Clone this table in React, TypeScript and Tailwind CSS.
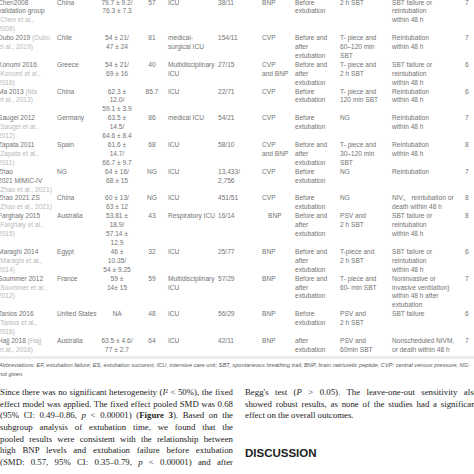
import React from "react";

type Seg = [string, boolean];

interface Row {
  study: Seg[][];
  country: string[];
  age: string[];
  n: string;
  icu: string[];
  efes: string[];
  marker: string[];
  timing: string[];
  sbt: string[];
  outcome: string[];
  score: string;
  markerIndent?: boolean;
}

const rows: Row[] = [
  {
    study: [[["Chen2008", false]], [["validation group", false]], [["(Chen et al.,", true]], [["2008)", true]]],
    country: ["China"],
    age: ["79.7 ± 9.2/", "76.3 ± 7.3"],
    n: "57",
    icu: ["ICU"],
    efes: ["38/11"],
    marker: ["BNP"],
    timing: ["Before", "extubation"],
    sbt: ["2 h SBT"],
    outcome: ["SBT failure or", "reintubation", "within 48 h"],
    score: "7",
  },
  {
    study: [[["Dubo 2019 ", false], ["(Dubo", true]], [["et al., 2019)", true]]],
    country: ["Chile"],
    age: ["54 ± 21/", "47 ± 24"],
    n: "81",
    icu: ["medical-", "surgical ICU"],
    efes: ["154/11"],
    marker: ["CVP"],
    timing: ["Before and", "after", "extubation"],
    sbt: ["T- piece and", "60–120 min", "SBT"],
    outcome: ["Reintubation", "within 48 h"],
    score: "7",
  },
  {
    study: [[["Konomi 2016", false]], [["(Konomi et al.,", true]], [["2016)", true]]],
    country: ["Greece"],
    age: ["54 ± 21/", "69 ± 16"],
    n: "40",
    icu: ["Multidisciplinary", "ICU"],
    efes: ["27/15"],
    marker: ["CVP", "and BNP"],
    timing: ["Before and", "after", "extubation"],
    sbt: ["T- piece and", "2 h SBT"],
    outcome: ["SBT failure or", "reintubation", "within 48 h"],
    score: "6",
  },
  {
    study: [[["Ma 2013 ", false], ["(Ma", true]], [["et al., 2013)", true]]],
    country: ["China"],
    age: ["62.3 ±", "12.0/", "59.1 ± 3.9"],
    n: "85.7",
    icu: ["ICU"],
    efes: ["22/71"],
    marker: ["CVP"],
    timing: ["Before", "extubation"],
    sbt: ["T- piece and", "120 min SBT"],
    outcome: ["Reintubation", "within 48 h"],
    score: "6",
  },
  {
    study: [[["Saugel 2012", false]], [["(Saugel et al.,", true]], [["2012)", true]]],
    country: ["Germany"],
    age: ["63.5 ±", "14.5/", "64.6 ± 8.4"],
    n: "86",
    icu: ["medical ICU"],
    efes: ["54/21"],
    marker: ["CVP"],
    timing: ["Before", "extubation"],
    sbt: ["NG"],
    outcome: ["Reintubation", "within 48 h"],
    score: "7",
  },
  {
    study: [[["Zapata 2011", false]], [["(Zapata et al.,", true]], [["2011)", true]]],
    country: ["Spain"],
    age: ["61.6 ±", "14.7/", "66.7 ± 9.7"],
    n: "68",
    icu: ["ICU"],
    efes: ["58/10"],
    marker: ["CVP", "and BNP"],
    timing: ["Before and", "after", "extubation"],
    sbt: ["T- piece and", "30–120 min", "SBT"],
    outcome: ["Reintubation", "within 48 h"],
    score: "8",
  },
  {
    study: [[["Zhao", false]], [["2021 MIMIC-IV", false]], [["(Zhao et al., 2021)", true]]],
    country: ["NG"],
    age: ["64 ± 16/", "68 ± 15"],
    n: "NG",
    icu: ["ICU"],
    efes: ["13,433/", "2,756"],
    marker: ["CVP"],
    timing: ["Before", "extubation"],
    sbt: ["NG"],
    outcome: ["Reintubation"],
    score: "7",
  },
  {
    study: [[["Zhao 2021 ZS", false]], [["(Zhao et al., 2021)", true]]],
    country: ["China"],
    age: ["60 ± 13/", "63 ± 12"],
    n: "NG",
    icu: ["ICU"],
    efes: ["451/51"],
    marker: ["CVP"],
    timing: ["Before", "extubation"],
    sbt: ["NG"],
    outcome: ["NIV、 reintubation or", "death within 48 h"],
    score: "8",
  },
  {
    study: [[["Farghaly 2015", false]], [["(Farghaly et al.,", true]], [["2015)", true]]],
    country: ["Australia"],
    age: ["53.81 ±", "18.9/", "57.14 ±", "12.9"],
    n: "43",
    icu: ["Respiratory ICU"],
    efes: ["16/14"],
    marker: ["BNP"],
    markerIndent: true,
    timing: ["Before and", "after", "extubation"],
    sbt: ["PSV and", "2 h SBT"],
    outcome: ["SBT failure or", "reintubation", "within 48 h"],
    score: "8",
  },
  {
    study: [[["Maraghi 2014", false]], [["(Maraghi et al.,", true]], [["2014)", true]]],
    country: ["Egypt"],
    age: ["46 ±", "10.35/", "54 ± 9.25"],
    n: "32",
    icu: ["ICU"],
    efes: ["25/77"],
    marker: ["BNP"],
    timing: ["Before and", "after", "extubation"],
    sbt: ["T-piece and", "2 h SBT"],
    outcome: ["SBT failure or", "reintubation", "within 48 h"],
    score: "6",
  },
  {
    study: [[["Soummer 2012", false]], [["(Soummer et al.,", true]], [["2012)", true]]],
    country: ["France"],
    age: ["59 ±", "14± 15"],
    n: "59",
    icu: ["Multidisciplinary", "ICU"],
    efes: ["57/29"],
    marker: ["BNP"],
    timing: ["Before and", "after", "extubation"],
    sbt: ["T- piece and", "60- min SBT"],
    outcome: ["Noninvasive or", "invasive ventilation)", "within 48 h after", "extubation"],
    score: "7",
  },
  {
    study: [[["Tanios 2016", false]], [["(Tanios et al.,", true]], [["2016)", true]]],
    country: ["United States"],
    age: ["NA"],
    n: "48",
    icu: ["ICU"],
    efes: ["56/29"],
    marker: ["BNP"],
    timing: ["Before", "extubation"],
    sbt: ["PSV and", "2 h SBT"],
    outcome: ["SBT failure"],
    score: "6",
  },
  {
    study: [[["Hajj 2018 ", false], ["(Hajj", true]], [["et al., 2018)", true]]],
    country: ["Australia"],
    age: ["63.5 ± 4.6/", "77 ± 2.7"],
    n: "64",
    icu: ["ICU"],
    efes: ["42/11"],
    marker: ["BNP"],
    timing: ["after", "extubation"],
    sbt: ["PSV and", "60min SBT"],
    outcome: ["Nonscheduled NIVM,", "or death within 48 h"],
    score: "7",
  },
];

const Lines = ({ lines, className = "" }: { lines: string[]; className?: string }) => (
  <div className={className}>
    {lines.map((l, i) => (
      <div key={i} className="whitespace-nowrap">
        {l}
      </div>
    ))}
  </div>
);

const TableRow = ({ row }: { row: Row }) => (
  <div className="grid grid-cols-[59px_41px_38px_32px_50px_44px_33px_45px_52px_73px_12px] items-start">
    <div>
      {row.study.map((line, i) => (
        <div key={i} className="whitespace-nowrap">
          {line.map(([t, ref], j) => (
            <span key={j} className={ref ? "text-[#b8b8b8]" : ""}>
              {t}
            </span>
          ))}
        </div>
      ))}
    </div>
    <Lines lines={row.country} />
    <Lines lines={row.age} className="text-center" />
    <Lines lines={[row.n]} className="text-center" />
    <Lines lines={row.icu} />
    <Lines lines={row.efes} />
    <Lines lines={row.marker} className={row.markerIndent ? "pl-[6px]" : ""} />
    <Lines lines={row.timing} />
    <Lines lines={row.sbt} />
    <Lines lines={row.outcome} />
    <Lines lines={[row.score]} />
  </div>
);

const J = ({ children, last = true }: { children: React.ReactNode; last?: boolean }) => (
  <div className={last ? "whitespace-nowrap text-justify [text-align-last:justify]" : "whitespace-nowrap"}>
    {children}
  </div>
);

export default function App() {
  return (
    <div className="w-[474px] h-[474px] overflow-hidden bg-white">
      <div className="-mt-[1.5px] -ml-[2px] text-[6.6px] leading-[8.9px] text-[#737373] font-['Liberation_Sans','Noto_Sans_CJK_SC',sans-serif]">
        {rows.map((r, i) => (
          <TableRow key={i} row={r} />
        ))}
      </div>
      <div className="mt-[1.5px] h-[3px] bg-[#ececec]" />
      <div className="mt-[2px] -ml-[1px] text-[5.7px] leading-[9px] italic text-[#555] font-['Liberation_Sans',sans-serif]">
        <div className="whitespace-nowrap">
          Abbreviations: EF, extubation failure; ES, extubation successt; ICU, intensive care unit; SBT, spontaneous breathing trail; BNP, brain natriuretic peptide; CVP: central venous pressure; NG:
        </div>
        <div className="whitespace-nowrap">not given.</div>
      </div>
      <div className="mt-[8px] flex gap-[12px] text-[8.8px] leading-[11.6px] text-[#222] font-['Liberation_Serif',serif]">
        <div className="w-[233px] shrink-0">
          <J>
            Since there was no significant heterogeneity (<i>I</i>
            <sup className="text-[5.5px]">2</sup> &lt; 50%), the fixed
          </J>
          <J>effect model was applied. The fixed effect pooled SMD was 0.68</J>
          <J>
            (95% CI: 0.49–0.86, <i>p</i> &lt; 0.00001) (<b>Figure 3</b>). Based on the
          </J>
          <J>subgroup analysis of extubation time, we found that the</J>
          <J>pooled results were consistent with the relationship between</J>
          <J>high BNP levels and extubation failure before extubation</J>
          <J>
            (SMD: 0.57, 95% CI: 0.35–0.79, <i>p</i> &lt; 0.00001) and after
          </J>
        </div>
        <div className="w-[233px] shrink-0">
          <J>
            Begg's test (<i>P</i> &gt; 0.05). The leave-one-out sensitivity also
          </J>
          <J>showed robust results, as none of the studies had a significant</J>
          <J last={false}>effect on the overall outcomes.</J>
          <div className="mt-[24px] text-[11.5px] leading-[14px] font-bold font-['Liberation_Sans',sans-serif] text-[#222]">
            DISCUSSION
          </div>
        </div>
      </div>
    </div>
  );
}
